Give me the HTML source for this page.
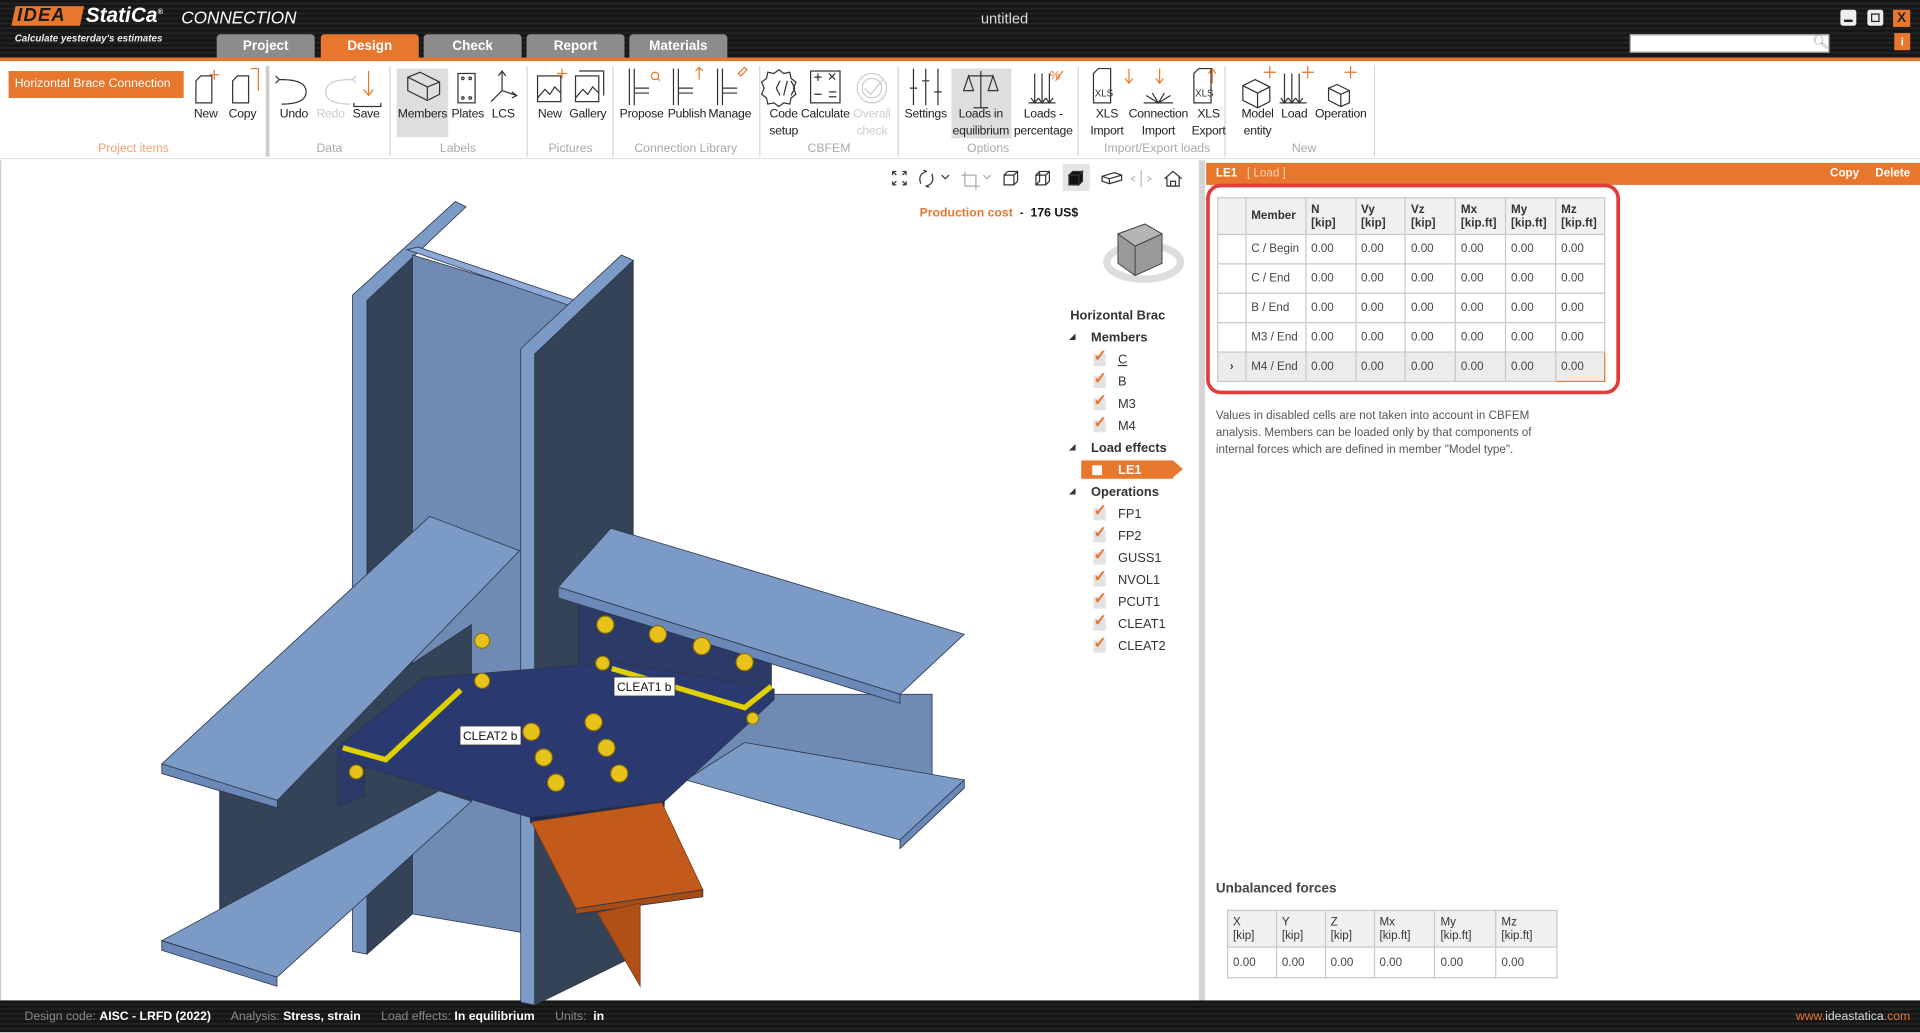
<!DOCTYPE html>
<html><head><meta charset="utf-8">
<style>
*{margin:0;padding:0;box-sizing:border-box}
html,body{width:1920px;height:1032px;overflow:hidden;background:#fff;font-family:"Liberation Sans",sans-serif}
.p{position:absolute;left:0;top:0;width:1568px;height:843px;transform:scale(1.22449);transform-origin:0 0}
.a{position:absolute}
.dark{background:repeating-linear-gradient(180deg,#161616 0,#161616 2px,#262626 3px,#1b1b1b 4px)}
.tab{position:absolute;top:28px;height:20px;width:80px;background:#8c8c8c;color:#fff;font-weight:bold;font-size:11px;text-align:center;line-height:20px;border-radius:3px 3px 0 0}
.lb{position:absolute;font-size:10px;color:#222;text-align:center;width:60px;line-height:14px;letter-spacing:-0.2px}
.gl{position:absolute;top:116px;font-size:10px;color:#a8a8a8;text-align:center;width:120px}
.sep{position:absolute;top:54px;width:1px;height:74px;background:#d6d6d6}
table{border-collapse:collapse;font-size:9.5px;color:#444}
td{border:1px solid #c8c8c8;padding:0 4px}
.tr{position:absolute;font-size:10.5px;color:#333}
.ck{position:absolute;color:#e8772e;font-size:13px;font-weight:bold}
.ckb{position:absolute;width:10px;height:10px;background:#e2e2e2}
</style></head><body>
<div class="p">
<div class="a dark" style="left:0;top:0;width:1568px;height:48px"></div>
<div class="a" style="left:11px;top:5px;width:56px;height:16px;background:#e8772e;transform:skewX(-12deg)"></div>
<div class="a" style="left:14px;top:4px;font-size:15px;font-weight:bold;font-style:italic;color:#1a1a1a;letter-spacing:1px">IDEA</div>
<div class="a" style="left:70px;top:3px;font-size:17px;font-weight:bold;font-style:italic;color:#fff">StatiCa<sup style="font-size:6px">®</sup></div>
<div class="a" style="left:148px;top:6px;font-size:14px;font-style:italic;color:#fff">CONNECTION</div>
<div class="a" style="left:12px;top:27px;font-size:8px;font-style:italic;font-weight:bold;color:#eee">Calculate yesterday's estimates</div>
<div class="a" style="left:801px;top:8px;font-size:12px;color:#ddd">untitled</div>
<div class="tab" style="left:177px">Project</div>
<div class="tab" style="left:262px;background:#e8772e">Design</div>
<div class="tab" style="left:346px">Check</div>
<div class="tab" style="left:430px">Report</div>
<div class="tab" style="left:514px">Materials</div>
<div class="a" style="left:1331px;top:28px;width:163px;height:15px;background:#fff;border:1px solid #aaa"></div>
<div class="a" style="left:1480px;top:28px;color:#999;font-size:11px">&#x1F50D;&#xFE0E;</div>
<div class="a" style="left:1503px;top:8px;width:13px;height:13px;background:#eee;border-radius:2px"><div style="margin:8px 3px 0;height:2px;background:#222"></div></div>
<div class="a" style="left:1525px;top:8px;width:13px;height:13px;background:#eee;border-radius:2px"><div style="margin:3px;height:7px;border:1.5px solid #222"></div></div>
<div class="a" style="left:1546px;top:8px;width:14px;height:14px;background:#e8772e;color:#222;font-weight:bold;font-size:11px;text-align:center;line-height:14px">X</div>
<div class="a" style="left:1547px;top:27px;width:13px;height:14px;background:#e8772e;color:#fff;font-weight:bold;font-size:9px;text-align:center;line-height:14px">i</div>
<div class="a" style="left:0;top:47px;width:1568px;height:3px;background:#e8772e"></div>
<div class="a" style="left:0;top:50px;width:1568px;height:80px;background:#fff;border-bottom:1px solid #e2e2e2"></div>
<div class="a" style="left:7px;top:58px;width:143px;height:22px;background:#e8772e;color:#fff;font-size:10px;line-height:22px;padding-left:5px">Horizontal Brace Connection <span style="font-size:7px;margin-left:4px">▼</span></div>
<div class="a" style="left:324px;top:56px;width:42px;height:56px;background:#dedede"></div>
<div class="a" style="left:777px;top:56px;width:49px;height:57px;background:#dedede"></div>
<div class="sep" style="left:217px;width:3px;background:#ccc"></div>
<div class="sep" style="left:318px"></div><div class="sep" style="left:430px"></div><div class="sep" style="left:500px"></div><div class="sep" style="left:620px"></div><div class="sep" style="left:733px"></div><div class="sep" style="left:880px"></div><div class="sep" style="left:1000px"></div><div class="sep" style="left:1122px"></div>
<svg class="a" style="left:0;top:50px" width="1130" height="60" fill="none" stroke="#333" stroke-width="1">
<g stroke="#e8772e"><path d="M175 15v-8M171 11h8M205 6h6v18M301 8v20M297 23l4 5 4-5M922 6v12M919 14l3 4 3-4M947 6v12M944 14l3 4 3-4M990 18v-12M987 10l3-4 3 4M1037 4v10M1032 9h10M1068 4v10M1063 9h10M1103 4v10M1098 9h10M862 16l6-8"/><circle cx="535" cy="12" r="3"/><path d="M537 14l2 2M571 5v10M568 8l3-3 3 3M603 10l5-5 2 2-5 5z"/><path d="M455 10h8M459 6v8"/></g>
<path d="M160 34v-18l4-4h9v22zM190 34v-18l4-4h9v22z"/>
<path d="M233 15h-5l-3 3M225 12l3 3-3 3M230 15q20 0 20 10t-20 10"/>
<path stroke="#ccc" d="M283 15h5l3 3M291 12l-3 3 3 3M286 15q-20 0-20 10t20 10"/>
<path d="M289 34v3h22v-3"/>
<path d="M333 13l10-4 16 8v10l-10 5-16-8zM333 13l16 8v10M349 21l10-4"/>
<rect x="374" y="10" width="14" height="24"/><circle cx="378" cy="14" r="1"/><circle cx="384" cy="14" r="1"/><circle cx="378" cy="30" r="1"/><circle cx="384" cy="30" r="1"/>
<path d="M410 8v16l12 4M410 24l-9 9M407 12l3-4 3 4M418 25l4 3-4 2"/>
<rect x="439" y="12" width="19" height="21"/><path d="M439 30l6-7 4 4 4-6 5 5"/><rect x="470" y="12" width="19" height="21"/><path d="M473 8h20v20M470 30l6-7 4 4 4-6 5 5"/>
<path d="M514 6v30M518 6v30M518 22h12M518 26h12M550 6v30M554 6v30M554 22h12M554 26h12M586 6v30M590 6v30M590 22h12M590 26h12"/>
<path d="M632 10l4-3 4 3 5-1 1 5 4 3-2 5 2 5-4 3-1 5-5-1-4 3-4-3-5 1-1-5-4-3 2-5-2-5 4-3 1-5zM637 16l-3 6 3 6M643 16l-3 12M646 16l3 6-3 6"/>
<rect x="662" y="8" width="24" height="26"/><path d="M665 13h6M668 10v6M677 10l5 5M682 10l-5 5M665 27h6M677 25h6M677 29h6"/>
<g stroke="#ccc"><circle cx="712" cy="22" r="12"/><circle cx="712" cy="22" r="8"/><path d="M706 22l5 5 10-12"/></g>
<path d="M746 6v30M756 6v30M766 6v30M743 22h6M753 16h6M763 25h6"/>
<path d="M801 8v30M791 12h20M791 12l-4 12h8zM811 12l-4 12h8zM795 38h12"/>
<path d="M845 10v24M851 10v24M857 10v24M842 30l3 4 3-4M848 30l3 4 3-4M854 30l3 4 3-4M840 34h22"/>
<text x="857" y="15" fill="#e8772e" stroke="none" font-size="10">%</text>
<path d="M893 10l4-4h10v28h-14z"/><text x="894" y="29" fill="#333" stroke="none" font-size="8">XLS</text>
<path d="M975 10l4-4h10v28h-14z"/><text x="976" y="29" fill="#333" stroke="none" font-size="8">XLS</text>
<path d="M934 34h24M936 28l10 6 10-6M941 26l5 8 5-8"/>
<path d="M1015 20l10-5 12 6v12l-10 5-12-6zM1015 20l12 6v12M1027 26l10-5"/>
<path d="M1049 10v24M1055 10v24M1061 10v24M1046 30l3 4 3-4M1052 30l3 4 3-4M1058 30l3 4 3-4M1045 34h22"/>
<path d="M1085 22l7-3 10 5v10l-7 3-10-5zM1085 22l10 5v10M1095 27l7-3"/>
</svg>
<div class="lb" style="left:138px;top:87px">New</div>
<div class="lb" style="left:168px;top:87px">Copy</div>
<div class="lb" style="left:210px;top:87px">Undo</div>
<div class="lb" style="left:240px;top:87px;color:#ccc">Redo</div>
<div class="lb" style="left:269px;top:87px">Save</div>
<div class="lb" style="left:315px;top:87px">Members</div>
<div class="lb" style="left:352px;top:87px">Plates</div>
<div class="lb" style="left:381px;top:87px">LCS</div>
<div class="lb" style="left:419px;top:87px">New</div>
<div class="lb" style="left:450px;top:87px">Gallery</div>
<div class="lb" style="left:494px;top:87px">Propose</div>
<div class="lb" style="left:531px;top:87px">Publish</div>
<div class="lb" style="left:566px;top:87px">Manage</div>
<div class="lb" style="left:610px;top:87px">Code<br>setup</div>
<div class="lb" style="left:644px;top:87px">Calculate</div>
<div class="lb" style="left:682px;top:87px;color:#ccc">Overall<br>check</div>
<div class="lb" style="left:726px;top:87px">Settings</div>
<div class="lb" style="left:771px;top:87px">Loads in<br>equilibrium</div>
<div class="lb" style="left:822px;top:87px">Loads -<br>percentage</div>
<div class="lb" style="left:874px;top:87px">XLS<br>Import</div>
<div class="lb" style="left:916px;top:87px">Connection<br>Import</div>
<div class="lb" style="left:957px;top:87px">XLS<br>Export</div>
<div class="lb" style="left:997px;top:87px">Model<br>entity</div>
<div class="lb" style="left:1027px;top:87px">Load</div>
<div class="lb" style="left:1065px;top:87px">Operation</div>
<div class="gl" style="left:49px;color:#f0a070">Project items</div>
<div class="gl" style="left:209px">Data</div>
<div class="gl" style="left:314px">Labels</div>
<div class="gl" style="left:406px">Pictures</div>
<div class="gl" style="left:500px">Connection Library</div>
<div class="gl" style="left:617px">CBFEM</div>
<div class="gl" style="left:747px">Options</div>
<div class="gl" style="left:885px">Import/Export loads</div>
<div class="gl" style="left:1005px">New</div>
<div class="a" style="left:0;top:131px;width:1px;height:687px;background:#ccc"></div>
<div class="a" style="left:979px;top:131px;width:5px;height:687px;background:#d4d4d4"></div>
<div class="a" style="left:868px;top:134px;width:22px;height:22px;background:#e4e4e4"></div>
<svg class="a" style="left:724px;top:136px" width="250" height="20" fill="none" stroke="#333" stroke-width="1">
<path d="M5 4l3 3M5 4h3M5 4v3M16 4l-3 3M16 4h-3M16 4v3M5 15l3-3M5 15h3M5 15v-3M16 15l-3-3M16 15h-3M16 15v-3"/>
<path d="M28 14q-3-8 5-10M33 4l-3-1M37 6q3 8-5 10M32 16l3 1M45 7l3 3 3-3"/>
<path stroke="#aaa" d="M64 4v12h12M61 7h12v12M79 7l3 3 3-3"/>
<path d="M96 7h8v8h-8zM99 4h8v8M96 7l3-3M104 7l3-3M104 15l3-3"/>
<path d="M122 7h8v8h-8zM125 4h8v8M122 7l3-3M130 7l3-3M130 15l3-3M122 15l3-3v-8"/>
<path fill="#111" d="M149 7h8v8h-8zM149 7l3-3h8l-3 3zM157 7l3-3v8l-3 3z"/>
<path d="M176 8l10-3 6 2v4l-10 3-6-2zM176 8l6 2 10-3M182 10v4"/>
<path stroke="#bbb" d="M208 3v14M203 8l-3 2 3 2M213 8l3 2-3 2"/>
<path d="M227 10l7-6 7 6M229 9v7h10v-7M232 16v-4h4v4"/>
</svg>
<div class="a" style="left:751px;top:169px;font-size:10px;font-weight:bold;color:#e8772e">Production cost &nbsp;<span style="color:#333">-</span>&nbsp; <span style="color:#111">176 US$</span></div>
<svg class="a" style="left:898px;top:178px" width="70" height="60">
<ellipse cx="36" cy="36" rx="30" ry="14" fill="none" stroke="#ddd" stroke-width="6"/>
<path d="M15 13l22-8 14 8v24l-22 10-14-10z" fill="#9a9a9a" stroke="#444" stroke-width="0.8"/>
<path d="M15 13l14 10 22-10M29 23v24" fill="none" stroke="#444" stroke-width="0.8"/>
<path d="M15 13l22-8 14 8-22 10z" fill="#b5b5b5" stroke="#444" stroke-width="0.8"/>
</svg>
<div class="tr" style="left:874px;top:252px;font-weight:bold">Horizontal Brac</div>
<div class="tr" style="left:873px;top:271px;font-size:7px">◢</div><div class="tr" style="left:891px;top:270px;font-weight:bold">Members</div>
<div class="tr" style="left:873px;top:361px;font-size:7px">◢</div><div class="tr" style="left:891px;top:360px;font-weight:bold">Load effects</div>
<div class="tr" style="left:873px;top:397px;font-size:7px">◢</div><div class="tr" style="left:891px;top:396px;font-weight:bold">Operations</div>
<div class="a" style="left:883px;top:376px;width:75px;height:15px;background:#e8772e"></div>
<div class="a" style="left:958px;top:376px;width:0;height:0;border-top:7.5px solid transparent;border-bottom:7.5px solid transparent;border-left:8px solid #e8772e"></div>
<div class="a" style="left:892px;top:380px;width:8px;height:8px;background:#fff"></div>
<div class="tr" style="left:913px;top:378px;color:#fff;font-weight:bold">LE1</div>
<div class="ckb" style="left:893px;top:289px"></div><div class="ck" style="left:893px;top:283px">✓</div><div class="tr" style="left:913px;top:288px;text-decoration:underline">C</div>
<div class="ckb" style="left:893px;top:307px"></div><div class="ck" style="left:893px;top:301px">✓</div><div class="tr" style="left:913px;top:306px">B</div>
<div class="ckb" style="left:893px;top:325px"></div><div class="ck" style="left:893px;top:319px">✓</div><div class="tr" style="left:913px;top:324px">M3</div>
<div class="ckb" style="left:893px;top:343px"></div><div class="ck" style="left:893px;top:337px">✓</div><div class="tr" style="left:913px;top:342px">M4</div>
<div class="ckb" style="left:893px;top:415px"></div><div class="ck" style="left:893px;top:409px">✓</div><div class="tr" style="left:913px;top:414px">FP1</div>
<div class="ckb" style="left:893px;top:433px"></div><div class="ck" style="left:893px;top:427px">✓</div><div class="tr" style="left:913px;top:432px">FP2</div>
<div class="ckb" style="left:893px;top:451px"></div><div class="ck" style="left:893px;top:445px">✓</div><div class="tr" style="left:913px;top:450px">GUSS1</div>
<div class="ckb" style="left:893px;top:469px"></div><div class="ck" style="left:893px;top:463px">✓</div><div class="tr" style="left:913px;top:468px">NVOL1</div>
<div class="ckb" style="left:893px;top:487px"></div><div class="ck" style="left:893px;top:481px">✓</div><div class="tr" style="left:913px;top:486px">PCUT1</div>
<div class="ckb" style="left:893px;top:505px"></div><div class="ck" style="left:893px;top:499px">✓</div><div class="tr" style="left:913px;top:504px">CLEAT1</div>
<div class="ckb" style="left:893px;top:523px"></div><div class="ck" style="left:893px;top:517px">✓</div><div class="tr" style="left:913px;top:522px">CLEAT2</div>
<div class="a" style="left:985px;top:133px;width:583px;height:18px;background:#e8772e;color:#fff;font-size:9.5px;line-height:18px;padding-left:8px"><b>LE1</b>&nbsp;&nbsp; <span style="color:#ffd5b8">[ Load ]</span><span style="position:absolute;right:8px;font-weight:bold">Copy &nbsp;&nbsp;&nbsp; Delete</span></div>
<div class="a" style="left:985px;top:150px;width:338px;height:172px;border:3px solid #e23b3b;border-radius:12px"></div>
<table class="a" style="left:994px;top:161px;width:317px">
<tr style="height:30px;background:#f0f0f0;font-weight:bold;color:#333"><td style="width:23px"></td><td style="width:49px">Member</td><td style="width:41px">N<br>[kip]</td><td style="width:41px">Vy<br>[kip]</td><td style="width:41px">Vz<br>[kip]</td><td style="width:41px">Mx<br>[kip.ft]</td><td style="width:41px">My<br>[kip.ft]</td><td style="width:40px">Mz<br>[kip.ft]</td></tr>
<tr style="height:24px"><td></td><td>C / Begin</td><td>0.00</td><td>0.00</td><td>0.00</td><td>0.00</td><td>0.00</td><td>0.00</td></tr>
<tr style="height:24px"><td></td><td>C / End</td><td>0.00</td><td>0.00</td><td>0.00</td><td>0.00</td><td>0.00</td><td>0.00</td></tr>
<tr style="height:24px"><td></td><td>B / End</td><td>0.00</td><td>0.00</td><td>0.00</td><td>0.00</td><td>0.00</td><td>0.00</td></tr>
<tr style="height:24px"><td></td><td>M3 / End</td><td>0.00</td><td>0.00</td><td>0.00</td><td>0.00</td><td>0.00</td><td>0.00</td></tr>
<tr style="height:24px;background:#ececec"><td style="text-align:center;font-weight:bold">›</td><td>M4 / End</td><td>0.00</td><td>0.00</td><td>0.00</td><td>0.00</td><td>0.00</td><td style="border:1.5px solid #e8772e">0.00</td></tr>
</table>
<div class="a" style="left:993px;top:333px;font-size:9.5px;color:#555;line-height:14px;width:272px">Values in disabled cells are not taken into account in CBFEM analysis. Members can be loaded only by that components of internal forces which are defined in member "Model type".</div>
<div class="a" style="left:993px;top:720px;font-size:11px;font-weight:bold;color:#444">Unbalanced forces</div>
<table class="a" style="left:1002px;top:743px;width:270px">
<tr style="height:30px;background:#f0f0f0;color:#333"><td>X<br>[kip]</td><td>Y<br>[kip]</td><td>Z<br>[kip]</td><td>Mx<br>[kip.ft]</td><td>My<br>[kip.ft]</td><td>Mz<br>[kip.ft]</td></tr>
<tr style="height:25px"><td>0.00</td><td>0.00</td><td>0.00</td><td>0.00</td><td>0.00</td><td>0.00</td></tr>
</table>
<div class="a dark" style="left:0;top:817px;width:1568px;height:26px;font-size:10px;line-height:27px;color:#8a8a8a;padding-left:20px">Design code: <b style="color:#fff">AISC - LRFD (2022)</b>&nbsp;&nbsp;&nbsp;&nbsp;&nbsp; Analysis: <b style="color:#fff">Stress, strain</b>&nbsp;&nbsp;&nbsp;&nbsp;&nbsp; Load effects: <b style="color:#fff">In equilibrium</b>&nbsp;&nbsp;&nbsp;&nbsp;&nbsp; Units: &nbsp;<b style="color:#fff">in</b>
<span style="position:absolute;right:8px;color:#e8772e">www.<span style="color:#ddd">ideastatica</span>.com</span></div>
</div>
<svg class="a" style="left:0;top:0;position:absolute" width="1920" height="1032">
<g transform="translate(150,180) scale(0.5357)" stroke="#2b3548" stroke-width="1.5">
<polygon points="405,225 490,140 490,1370 405,1445" fill="#354358"/>
<polygon points="378,215 570,40 590,50 405,225 405,1445 378,1440" fill="#7b9ac6"/>
<polygon points="490,140 785,230 785,1420 490,1370" fill="#6f8bb3"/>
<polygon points="480,130 500,125 795,225 785,235" fill="#8eaad6"/>
<polygon points="718,325 902,150 902,1450 718,1540" fill="#354358"/>
<polygon points="692,315 880,140 902,150 718,325 718,1540 692,1535" fill="#7b9ac6"/>
<polygon points="130,1140 600,830 600,1160 130,1460" fill="#354358"/>
<polygon points="22,1420 540,1140 600,1160 237,1488" fill="#7b9ac6"/>
<polygon points="22,1420 237,1488 237,1505 22,1438" fill="#6a88b8"/>
<polygon points="22,1090 522,628 690,692 238,1158" fill="#7b9ac6"/>
<polygon points="22,1090 238,1158 238,1172 22,1108" fill="#6a88b8"/>
<polygon points="800,790 1160,880 1160,1055 800,960" fill="#2b3a66"/>
<polygon points="1000,960 1460,960 1460,1190 1000,1110" fill="#6f8bb3"/>
<polygon points="1000,1120 1110,1050 1520,1120 1400,1232" fill="#7b9ac6"/>
<polygon points="1400,1232 1520,1120 1520,1135 1400,1248" fill="#6a88b8"/>
<polygon points="762,760 860,650 1520,848 1400,960" fill="#7b9ac6"/>
<polygon points="762,760 1400,960 1400,977 762,780" fill="#6a88b8"/>
<polygon points="350,1080 350,1170 400,1150 400,1085" fill="#2b3a66"/>
<polygon points="350,1060 510,930 870,900 1165,950 1165,970 960,1160 710,1190 350,1080" fill="#2a3a70"/>
<polygon points="710,1190 960,1160 960,1170 710,1200" fill="#1e2a55"/>
<polygon points="712,1198 955,1162 1032,1325 795,1360" fill="#c25a1c" stroke="#7a3a10"/>
<polygon points="795,1360 1032,1325 1032,1338 795,1370" fill="#a84c15"/>
<polygon points="835,1368 915,1350 915,1505" fill="#b04f16" stroke="#7a3a10"/>
<g stroke="#e0d000" stroke-width="10" fill="none"><path d="M360 1060L440 1082L580 952M862 912L1110 985L1160 945"/></g>
<g fill="#e6c21a" stroke="#8a6e00" stroke-width="2">
<circle cx="620" cy="860" r="14"/><circle cx="620" cy="935" r="14"/><circle cx="850" cy="830" r="16"/><circle cx="948" cy="848" r="16"/><circle cx="1030" cy="870" r="16"/><circle cx="1110" cy="900" r="16"/><circle cx="712" cy="1030" r="16"/><circle cx="828" cy="1012" r="16"/><circle cx="735" cy="1078" r="16"/><circle cx="852" cy="1060" r="16"/><circle cx="758" cy="1125" r="16"/><circle cx="876" cy="1108" r="16"/><circle cx="385" cy="1105" r="13"/><circle cx="845" cy="902" r="13"/><circle cx="1125" cy="1005" r="11"/>
</g>
</g>
<rect x="614" y="677" width="61" height="19" fill="#fff" stroke="#333" stroke-width="0.8"/>
<text x="617" y="691" font-family="Liberation Sans" font-size="12" fill="#111">CLEAT1 b</text>
<rect x="460" y="726" width="61" height="19" fill="#fff" stroke="#333" stroke-width="0.8"/>
<text x="463" y="740" font-family="Liberation Sans" font-size="12" fill="#111">CLEAT2 b</text>
</svg>
</body></html>
